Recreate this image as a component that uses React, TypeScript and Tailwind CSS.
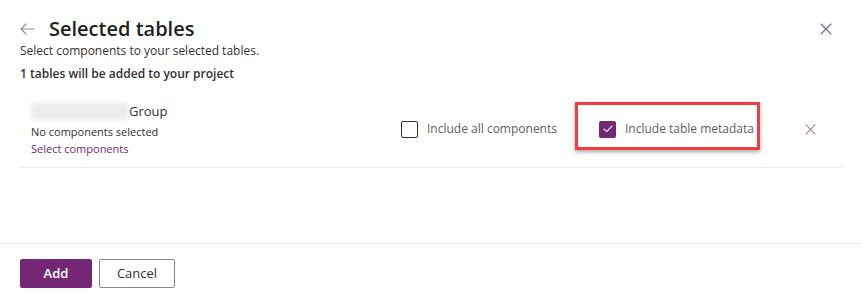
import React from 'react'

const ThinX = ({ size, color }: { size: number; color: string }) => (
  <svg width={size} height={size} viewBox="0 0 12 12" fill="none">
    <path d="M1 1L11 11M11 1L1 11" stroke={color} strokeWidth="1.1" strokeLinecap="round" />
  </svg>
)

const App = () => {
  return (
    <div className="w-[862px] h-[302px] bg-white flex flex-col text-[#323130]" style={{ fontFamily: '"Segoe UI", "Open Sans", sans-serif' }}>
      <div className="px-5 pt-[15px]">
        <div className="flex items-center justify-between h-[28px]">
          <div className="flex items-center">
            <svg width="15" height="12" viewBox="0 0 15 12" fill="none" className="mr-[14px]">
              <path d="M6 1L1 6L6 11M1 6H14" stroke="#9b8aa6" strokeWidth="1.2" strokeLinecap="round" strokeLinejoin="round" />
            </svg>
            <h2 className="text-[20px] font-semibold text-[#201f1e] leading-[28px]">Selected tables</h2>
          </div>
          <div className="mr-[10px]">
            <ThinX size={12} color="#7a5fa0" />
          </div>
        </div>
        <p className="text-[12px] leading-[16px]">Select components to your selected tables.</p>
        <p className="text-[12px] leading-[16px] mt-[7px] font-semibold">1 tables will be added to your project</p>
      </div>

      <div className="px-5 mt-[9px]">
        <div className="flex items-center border-b border-[#edebe9] h-[77px] pl-[11px]">
          <div className="w-[370px] flex flex-col">
            <div className="flex items-center h-[20px]">
              <div className="w-[97px] h-[18px] rounded-sm bg-[#ececec] blur-[2px] mr-[1px]"></div>
              <span className="text-[13px] leading-[20px]">Group</span>
            </div>
            <span className="text-[11px] leading-[17px] mt-[2px]">No components selected</span>
            <span className="text-[11px] leading-[17px] text-[#742774]">Select components</span>
          </div>
          <label className="flex items-center w-[174px]">
            <span className="w-[17px] h-[17px] border border-[#323130] rounded-[2px] mr-[9px]"></span>
            <span className="text-[12px] text-[#605e5c]">Include all components</span>
          </label>
          <div className="flex items-center border-[3px] border-[#ee3d43] shadow-[0_2px_4px_rgba(0,0,0,0.35)] h-[48px] pl-[21px] pr-[3px] mb-[6px]">
            <span className="w-[17px] h-[17px] bg-[#742774] rounded-[2px] mr-[9px] mt-[6px] flex items-center justify-center">
              <svg width="10" height="8" viewBox="0 0 10 8" fill="none">
                <path d="M1 4L3.6 6.6L9 1.2" stroke="white" strokeWidth="1.1" strokeLinecap="round" strokeLinejoin="round" />
              </svg>
            </span>
            <span className="text-[12px] text-[#605e5c] mt-[6px]">Include table metadata</span>
          </div>
          <div className="ml-[45px]">
            <ThinX size={11} color="#a07aae" />
          </div>
        </div>
      </div>

      <div className="mt-auto border-t border-[#edebe9] px-5 pt-[15px] pb-[14px] flex gap-[7px]">
        <button className="w-[72px] h-[29px] bg-[#742774] text-white text-[13px] font-semibold rounded-[2px]">Add</button>
        <button className="w-[76px] h-[29px] border border-[#8a8886] text-[13px] rounded-[2px] text-[#323130]">Cancel</button>
      </div>
    </div>
  )
}

export default App
